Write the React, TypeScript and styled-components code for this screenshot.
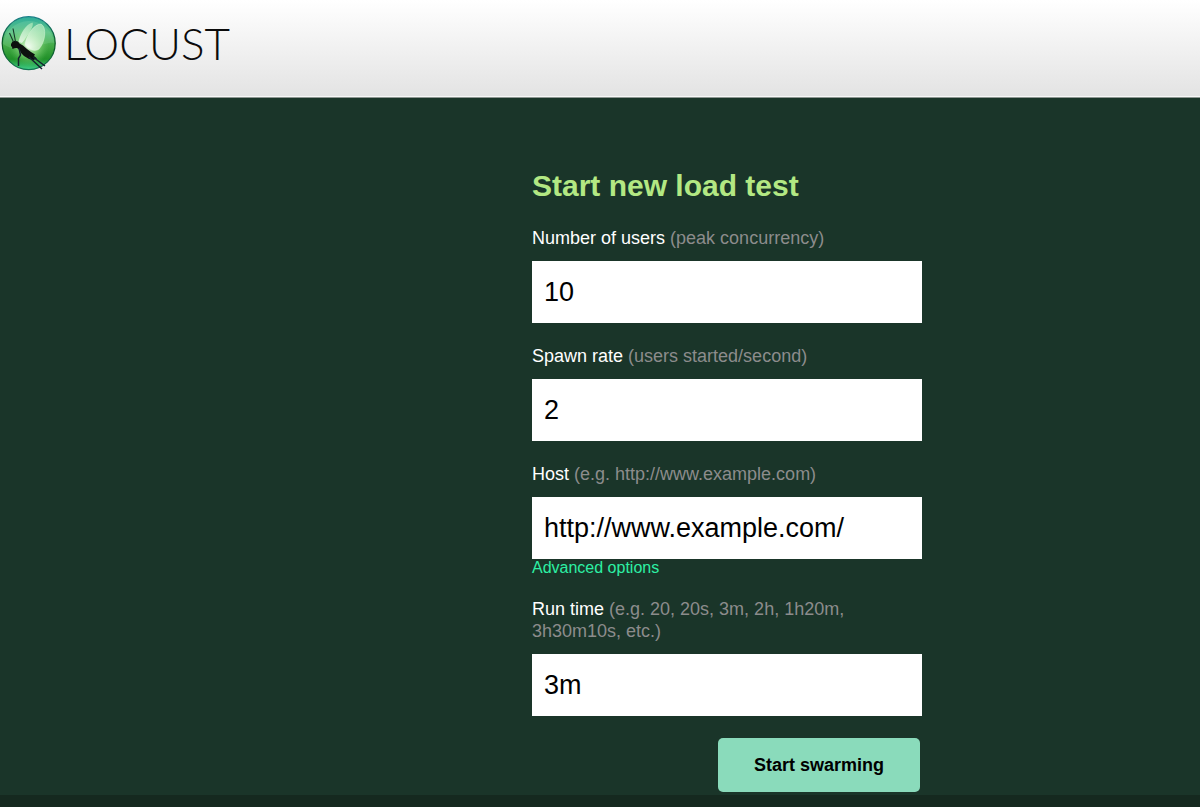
import React from "react";
import styled, { createGlobalStyle } from "styled-components";

const GlobalStyle = createGlobalStyle`
  *, *::before, *::after { box-sizing: border-box; }
  html, body, #root { min-height: 100vh; }
  body {
    margin: 0;
    background: #1a3529;
    color: #ffffff;
    font-family: "Liberation Sans", Arial, sans-serif;
  }
  #root { display: flex; }
`;

const Page = styled.div`
  flex: 1;
  display: flex;
  flex-direction: column;
  min-height: 100vh;
`;

const Header = styled.header`
  display: flex;
  align-items: flex-start;
  height: 98px;
  padding-top: 15px;
  background: linear-gradient(#ffffff, #e3e3e3);
  border-bottom: 1px solid #8d9691;
  box-shadow: inset 0 -1px #f7f7f7;
`;

const Brand = styled.a`
  display: flex;
  align-items: center;
  gap: 6px;
  color: #0b0b0b;
  text-decoration: none;
`;

const Wordmark = styled.span`
  font-family: Lato, "Liberation Sans", sans-serif;
  font-size: 44px;
  font-weight: 300;
  line-height: 54px;
`;

const Main = styled.main`
  flex: 1;
  display: grid;
  grid-template-columns: minmax(0, 532fr) 390px minmax(0, 278fr);
  padding-top: 69px;
`;

const Form = styled.form`
  grid-column: 2;
  display: flex;
  flex-direction: column;
  gap: 22px;
`;

const Title = styled.h1`
  margin: 0;
  color: #b3e883;
  font-size: 30px;
  line-height: 38px;
`;

const Field = styled.div`
  display: flex;
  flex-direction: column;
`;

const Label = styled.label`
  margin-bottom: 12px;
  font-size: 18px;
  line-height: 22px;
`;

const Hint = styled.span`
  color: #8c8c8c;
`;

const TextInput = styled.input`
  width: 100%;
  height: 62px;
  padding: 0 12px;
  border: 0;
  border-radius: 0;
  background: #ffffff;
  color: #000000;
  font-family: inherit;
  font-size: 27px;
`;

const AdvancedLink = styled.a`
  align-self: flex-start;
  color: #2df0a4;
  font-size: 16px;
  line-height: 17px;
  text-decoration: none;
`;

const SubmitButton = styled.button`
  align-self: flex-end;
  width: 202px;
  height: 54px;
  margin-right: 2px;
  border: 0;
  border-radius: 5px;
  background: #8adbbb;
  color: #000000;
  font-family: inherit;
  font-size: 18px;
  font-weight: 700;
  cursor: pointer;
`;

const Footer = styled.footer`
  height: 12px;
  background: #15291f;
`;

const LocustLogo = () => (
  <svg width="58" height="56" viewBox="0 0 58 56" aria-hidden="true">
    <defs>
      <linearGradient id="orb" x1="0" y1="0" x2="0" y2="1">
        <stop offset="0" stopColor="#2fae9c" />
        <stop offset="0.3" stopColor="#58bf80" />
        <stop offset="0.55" stopColor="#43a945" />
        <stop offset="0.8" stopColor="#219029" />
        <stop offset="1" stopColor="#3fcf8a" />
      </linearGradient>
      <radialGradient id="glow" cx="0.5" cy="0.56" r="0.4">
        <stop offset="0" stopColor="#f2ffe9" stopOpacity="0.9" />
        <stop offset="0.5" stopColor="#b4efa0" stopOpacity="0.5" />
        <stop offset="1" stopColor="#6fd06c" stopOpacity="0" />
      </radialGradient>
      <linearGradient id="rim" x1="0" y1="0" x2="0" y2="1">
        <stop offset="0" stopColor="#1b8089" />
        <stop offset="0.5" stopColor="#07551c" />
        <stop offset="1" stopColor="#147452" />
      </linearGradient>
      <linearGradient id="wing" x1="1" y1="0" x2="0" y2="1">
        <stop offset="0" stopColor="#b5edba" stopOpacity="0.65" />
        <stop offset="1" stopColor="#ffffff" stopOpacity="0.75" />
      </linearGradient>
    </defs>
    <circle cx="28.7" cy="28.2" r="26.5" fill="url(#orb)" stroke="url(#rim)" strokeWidth="1.2" />
    <path d="M3 29C10 34 20 36 31 33S49 27 54.5 28A26 26 0 0 0 3 29Z" fill="#c2f5cf" fillOpacity="0.15" />
    <circle cx="28.7" cy="28.2" r="25" fill="url(#glow)" />
    <path d="M18.500 27C20 19 26 9 32.500 7.500C34.500 10 29 19 22 28Z" fill="url(#wing)" />
    <path d="M25 30C26 20 34 9 41 9C47 12 45.500 27 39 34C35 37 29 35 25 30Z" fill="url(#wing)" stroke="#e5fbe2" strokeOpacity="0.6" strokeWidth="0.7" />
    <path d="M11 29L12.500 26.500L15 25.700L18 26.500L19.500 28.500L23 30.500L27 34L31 37L35 39.500L34 41L37 43.500L33.500 45L29 44L24 41L21 38L19.500 35L17 33L14.500 33.200L12.500 34L12 32L11 31Z" fill="#0d110e" />
    <path d="M13.500 27L9.500 18M15.500 26.500L13 13.500" fill="none" stroke="#17392a" strokeWidth="1.100" />
    <path d="M19 33L20.500 40L18.500 43.500V51M29 42L42 54M33 42L45 51" fill="none" stroke="#14222e" strokeWidth="1.500" />
  </svg>
);

type FormFieldProps = {
  id: string;
  label: string;
  hint: string;
  value: string;
  children?: React.ReactNode;
};

const FormField = ({ id, label, hint, value, children }: FormFieldProps) => (
  <Field>
    <Label htmlFor={id}>
      {label} <Hint>{hint}</Hint>
    </Label>
    <TextInput id={id} name={id} type="text" defaultValue={value} spellCheck={false} />
    {children}
  </Field>
);

export default function App() {
  return (
    <>
      <GlobalStyle />
      <Page>
        <Header>
          <Brand href="#">
            <LocustLogo />
            <Wordmark>LOCUST</Wordmark>
          </Brand>
        </Header>
        <Main>
          <Form onSubmit={(event) => event.preventDefault()}>
            <Title>Start new load test</Title>
            <FormField id="user_count" label="Number of users" hint="(peak concurrency)" value="10" />
            <FormField id="spawn_rate" label="Spawn rate" hint="(users started/second)" value="2" />
            <FormField id="host" label="Host" hint="(e.g. http://www.example.com)" value="http://www.example.com/">
              <AdvancedLink href="#">Advanced options</AdvancedLink>
            </FormField>
            <FormField id="run_time" label="Run time" hint="(e.g. 20, 20s, 3m, 2h, 1h20m, 3h30m10s, etc.)" value="3m" />
            <SubmitButton type="submit">Start swarming</SubmitButton>
          </Form>
        </Main>
        <Footer />
      </Page>
    </>
  );
}
